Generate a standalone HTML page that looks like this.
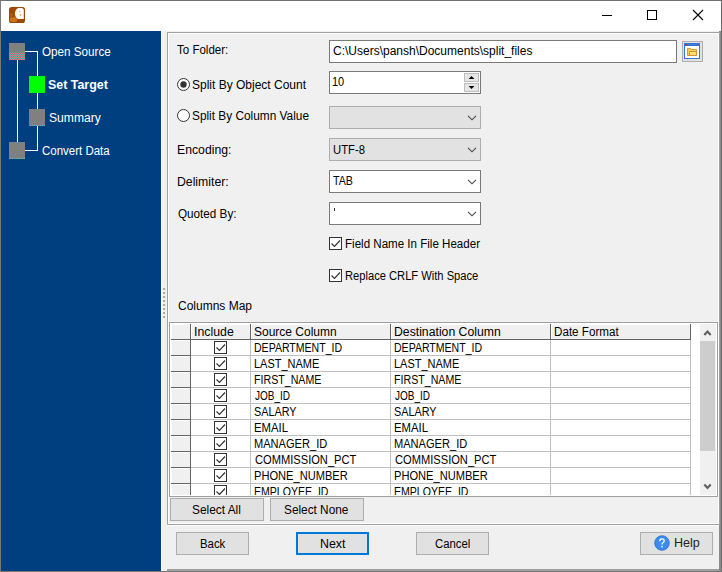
<!DOCTYPE html><html><head><meta charset="utf-8"><style>
*{margin:0;padding:0;box-sizing:border-box}
html,body{width:722px;height:572px;overflow:hidden;background:#f0f0f0;font-family:'Liberation Sans', sans-serif}
.a{position:absolute}
.t{position:absolute;font-size:12px;line-height:14px;white-space:pre;transform-origin:0 0}
.btn{position:absolute;background:#e1e1e1;border:1px solid #adadad}
.edit{position:absolute;background:#fff;border:1px solid #7a7a7a}
.combo{position:absolute;background:#e2e2e2;border:1px solid #adadad}
.cb{position:absolute;width:13px;height:13px;border:1px solid #333;background:#fff}

</style></head><body>
<div class="a" style="left:0;top:0;width:722px;height:31px;background:#fff"></div>
<div class="a" style="left:0;top:0;width:722px;height:1px;background:#6f6f6f"></div>
<div class="a" style="left:0;top:0;width:1px;height:572px;background:#7a7a7a"></div>
<div class="a" style="left:721px;top:0;width:1px;height:572px;background:#6a6a6a"></div>
<div class="a" style="left:719px;top:31px;width:2px;height:541px;background:#8c8c8c"></div>
<div class="a" style="left:0;top:571px;width:722px;height:1px;background:#777"></div>
<svg class="a" style="left:9px;top:7px" width="16" height="16" viewBox="0 0 16 16">
<rect x="0" y="0" width="16" height="16" rx="2.6" fill="#9c4a04"/>
<ellipse cx="4.5" cy="12.5" rx="3.8" ry="2.6" fill="#d27a1c" opacity="0.85"/>
<ellipse cx="2.5" cy="8" rx="1.5" ry="2" fill="#b8621a" opacity="0.7"/>
<path d="M9.3 1 L13.2 1 L14.8 2.6 L14.8 12 L9.3 12 Q6.2 10.8 5.8 6.8 Q6.2 2.2 9.3 1 Z" fill="#fdfbf7"/>
<circle cx="11.5" cy="8" r="0.9" fill="#f7b256"/>
<circle cx="10.5" cy="4.5" r="0.7" fill="#f4b0a0"/>
<circle cx="8.2" cy="5.5" r="0.6" fill="#e8e0a0"/>
</svg>
<div class="a" style="left:602px;top:15px;width:10px;height:1px;background:#000"></div>
<div class="a" style="left:647px;top:10px;width:10px;height:10px;border:1px solid #000"></div>
<svg class="a" style="left:692px;top:9px" width="12" height="12" viewBox="0 0 12 12"><path d="M1 1 L11 11 M11 1 L1 11" stroke="#000" stroke-width="1.1"/></svg>
<div class="a" style="left:1px;top:31px;width:160px;height:540px;background:#003f7f"></div>
<div class="a" style="left:17px;top:60px;width:1px;height:82px;background:#fff"></div>
<div class="a" style="left:25px;top:51px;width:13px;height:1px;background:#fff"></div>
<div class="a" style="left:37px;top:51px;width:1px;height:25px;background:#fff"></div>
<div class="a" style="left:37px;top:93px;width:1px;height:16px;background:#fff"></div>
<div class="a" style="left:37px;top:126px;width:1px;height:25px;background:#fff"></div>
<div class="a" style="left:25px;top:150px;width:13px;height:1px;background:#fff"></div>
<div class="a" style="left:9px;top:43px;width:16px;height:17px;background:#808080"></div>
<svg class="a" style="left:9px;top:52px" width="16" height="8"><defs><pattern id="dith" width="2" height="2" patternUnits="userSpaceOnUse"><rect width="2" height="2" fill="#5fb0b0"/><rect width="1" height="1" fill="#c86a6a"/><rect x="1" y="1" width="1" height="1" fill="#c86a6a"/></pattern></defs><rect width="16" height="8" fill="url(#dith)"/></svg>
<div class="a" style="left:9px;top:52px;width:16px;height:1px;background:#808080;opacity:.5"></div>
<div class="a" style="left:29px;top:76px;width:16px;height:17px;background:#00ff00"></div>
<div class="a" style="left:29px;top:109px;width:16px;height:17px;background:#808080"></div>
<div class="a" style="left:9px;top:142px;width:16px;height:17px;background:#808080"></div>
<svg class="a" style="left:29px;top:125px" width="16" height="1"><rect width="16" height="1" fill="url(#dith)"/></svg>
<svg class="a" style="left:9px;top:158px" width="16" height="1"><rect width="16" height="1" fill="url(#dith)"/></svg>
<div class="a" style="left:161px;top:31px;width:1px;height:540px;background:#fff"></div>
<div class="a" style="left:162px;top:287px;width:1px;height:1px;background:#fff"></div>
<div class="a" style="left:163px;top:288px;width:2px;height:2px;background:#a8a8a8"></div>
<div class="a" style="left:162px;top:291px;width:1px;height:1px;background:#fff"></div>
<div class="a" style="left:163px;top:292px;width:2px;height:2px;background:#a8a8a8"></div>
<div class="a" style="left:162px;top:295px;width:1px;height:1px;background:#fff"></div>
<div class="a" style="left:163px;top:296px;width:2px;height:2px;background:#a8a8a8"></div>
<div class="a" style="left:162px;top:299px;width:1px;height:1px;background:#fff"></div>
<div class="a" style="left:163px;top:300px;width:2px;height:2px;background:#a8a8a8"></div>
<div class="a" style="left:162px;top:303px;width:1px;height:1px;background:#fff"></div>
<div class="a" style="left:163px;top:304px;width:2px;height:2px;background:#a8a8a8"></div>
<div class="a" style="left:162px;top:307px;width:1px;height:1px;background:#fff"></div>
<div class="a" style="left:163px;top:308px;width:2px;height:2px;background:#a8a8a8"></div>
<div class="a" style="left:162px;top:311px;width:1px;height:1px;background:#fff"></div>
<div class="a" style="left:163px;top:312px;width:2px;height:2px;background:#a8a8a8"></div>
<div class="a" style="left:162px;top:315px;width:1px;height:1px;background:#fff"></div>
<div class="a" style="left:163px;top:316px;width:2px;height:2px;background:#a8a8a8"></div>
<div class="a" style="left:167px;top:32px;width:552px;height:1px;background:#a0a0a0"></div>
<div class="a" style="left:167px;top:32px;width:1px;height:492px;background:#a0a0a0"></div>
<div class="a" style="left:168px;top:33px;width:550px;height:1px;background:#fff"></div>
<div class="a" style="left:168px;top:33px;width:1px;height:490px;background:#fff"></div>
<div class="a" style="left:718px;top:33px;width:1px;height:491px;background:#fff"></div>
<div class="a" style="left:168px;top:523px;width:551px;height:1px;background:#fff"></div>
<div class="a" style="left:719px;top:32px;width:1px;height:493px;background:#a0a0a0"></div>
<div class="a" style="left:167px;top:524px;width:553px;height:1px;background:#a0a0a0"></div>
<div class="a" style="left:167px;top:525px;width:552px;height:1px;background:#fff"></div>
<div class="a" style="left:167px;top:569px;width:552px;height:2px;background:#a0a0a0"></div>
<div class="edit" style="left:329px;top:40px;width:348px;height:23px"></div>
<div class="btn" style="left:682px;top:41px;width:21px;height:21px"></div>
<svg class="a" style="left:684px;top:43px" width="16" height="16" viewBox="0 0 16 16">
<rect x="0" y="0" width="16" height="16" fill="#3a75d6"/>
<rect x="1" y="3" width="14" height="12" fill="#fff"/>
<rect x="1" y="1" width="1.5" height="1.5" fill="#e11"/>
<path d="M3.5 5.5 L6.5 5.5 L7.5 6.5 L12.5 6.5 L12.5 12.5 L3.5 12.5 Z" fill="#fbd35a" stroke="#e0902a" stroke-width="1"/>
<path d="M5.5 8.5 L12.5 8.5 L12.5 12.5 L5.5 12.5Z" fill="#fde27a" stroke="#e0902a" stroke-width="1"/>
</svg>
<div class="edit" style="left:329px;top:71px;width:152px;height:23px"></div>
<div class="a" style="left:464px;top:73px;width:15px;height:9px;background:#e6e6e6;border:1px solid #bdbdbd"></div>
<div class="a" style="left:464px;top:83px;width:15px;height:9px;background:#e6e6e6;border:1px solid #bdbdbd"></div>
<svg class="a" style="left:468px;top:75px" width="8" height="5"><path d="M0.6 3.9 L3.5 0.9 L6.4 3.9Z" fill="#000"/></svg>
<svg class="a" style="left:468px;top:85px" width="8" height="5"><path d="M0.6 1 L6.4 1 L3.5 4Z" fill="#000"/></svg>
<svg class="a" style="left:176px;top:77px" width="15" height="15" viewBox="0 0 15 15"><circle cx="7.5" cy="7.5" r="6" fill="#fff" stroke="#333" stroke-width="1"/><circle cx="7.5" cy="7.5" r="3.2" fill="#333"/></svg>
<svg class="a" style="left:176px;top:108px" width="15" height="15" viewBox="0 0 15 15"><circle cx="7.5" cy="7.5" r="6" fill="#fff" stroke="#333" stroke-width="1"/></svg>
<div class="combo" style="left:329px;top:106px;width:152px;height:23px"></div>
<svg class="a" style="left:467px;top:115px" width="10" height="6"><path d="M1 0.8 L5 4.8 L9 0.8" fill="none" stroke="#444" stroke-width="1.1"/></svg>
<div class="combo" style="left:329px;top:138px;width:152px;height:23px"></div>
<svg class="a" style="left:467px;top:147px" width="10" height="6"><path d="M1 0.8 L5 4.8 L9 0.8" fill="none" stroke="#444" stroke-width="1.1"/></svg>
<div class="edit" style="left:329px;top:170px;width:152px;height:23px"></div>
<svg class="a" style="left:467px;top:179px" width="10" height="6"><path d="M1 0.8 L5 4.8 L9 0.8" fill="none" stroke="#444" stroke-width="1.1"/></svg>
<div class="edit" style="left:329px;top:202px;width:152px;height:23px"></div>
<svg class="a" style="left:467px;top:211px" width="10" height="6"><path d="M1 0.8 L5 4.8 L9 0.8" fill="none" stroke="#444" stroke-width="1.1"/></svg>
<div class="a" style="left:334px;top:208px;width:1px;height:3px;background:#333"></div>
<div class="cb" style="left:329px;top:237px"></div>
<svg class="a" style="left:329px;top:237px" width="13" height="13"><path d="M2.5 6.5 L5.5 9.5 L11 3.5" fill="none" stroke="#333" stroke-width="1.2"/></svg>
<div class="cb" style="left:329px;top:269px"></div>
<svg class="a" style="left:329px;top:269px" width="13" height="13"><path d="M2.5 6.5 L5.5 9.5 L11 3.5" fill="none" stroke="#333" stroke-width="1.2"/></svg>
<div class="a" style="left:169px;top:322px;width:549px;height:175px;border:1px solid #a0a0a0;background:#fff"></div>
<div class="a" style="left:172px;top:325px;width:18px;height:14px;background:#f0f0f0"></div>
<div class="a" style="left:192px;top:325px;width:58px;height:14px;background:#f0f0f0"></div>
<div class="a" style="left:252px;top:325px;width:138px;height:14px;background:#f0f0f0"></div>
<div class="a" style="left:392px;top:325px;width:158px;height:14px;background:#f0f0f0"></div>
<div class="a" style="left:552px;top:325px;width:138px;height:14px;background:#f0f0f0"></div>
<div class="a" style="left:171px;top:339px;width:520px;height:1px;background:#646464"></div>
<div class="a" style="left:190px;top:324px;width:1px;height:15px;background:#646464"></div>
<div class="a" style="left:250px;top:324px;width:1px;height:15px;background:#646464"></div>
<div class="a" style="left:390px;top:324px;width:1px;height:15px;background:#646464"></div>
<div class="a" style="left:550px;top:324px;width:1px;height:15px;background:#646464"></div>
<div class="a" style="left:690px;top:324px;width:1px;height:15px;background:#646464"></div>
<div class="a" style="left:172px;top:341px;width:18px;height:14px;background:#f0f0f0"></div>
<div class="a" style="left:171px;top:355px;width:20px;height:1px;background:#646464"></div>
<div class="a" style="left:191px;top:355px;width:500px;height:1px;background:#c0c0c0"></div>
<div class="a" style="left:172px;top:357px;width:18px;height:14px;background:#f0f0f0"></div>
<div class="a" style="left:171px;top:371px;width:20px;height:1px;background:#646464"></div>
<div class="a" style="left:191px;top:371px;width:500px;height:1px;background:#c0c0c0"></div>
<div class="a" style="left:172px;top:373px;width:18px;height:14px;background:#f0f0f0"></div>
<div class="a" style="left:171px;top:387px;width:20px;height:1px;background:#646464"></div>
<div class="a" style="left:191px;top:387px;width:500px;height:1px;background:#c0c0c0"></div>
<div class="a" style="left:172px;top:389px;width:18px;height:14px;background:#f0f0f0"></div>
<div class="a" style="left:171px;top:403px;width:20px;height:1px;background:#646464"></div>
<div class="a" style="left:191px;top:403px;width:500px;height:1px;background:#c0c0c0"></div>
<div class="a" style="left:172px;top:405px;width:18px;height:14px;background:#f0f0f0"></div>
<div class="a" style="left:171px;top:419px;width:20px;height:1px;background:#646464"></div>
<div class="a" style="left:191px;top:419px;width:500px;height:1px;background:#c0c0c0"></div>
<div class="a" style="left:172px;top:421px;width:18px;height:14px;background:#f0f0f0"></div>
<div class="a" style="left:171px;top:435px;width:20px;height:1px;background:#646464"></div>
<div class="a" style="left:191px;top:435px;width:500px;height:1px;background:#c0c0c0"></div>
<div class="a" style="left:172px;top:437px;width:18px;height:14px;background:#f0f0f0"></div>
<div class="a" style="left:171px;top:451px;width:20px;height:1px;background:#646464"></div>
<div class="a" style="left:191px;top:451px;width:500px;height:1px;background:#c0c0c0"></div>
<div class="a" style="left:172px;top:453px;width:18px;height:14px;background:#f0f0f0"></div>
<div class="a" style="left:171px;top:467px;width:20px;height:1px;background:#646464"></div>
<div class="a" style="left:191px;top:467px;width:500px;height:1px;background:#c0c0c0"></div>
<div class="a" style="left:172px;top:469px;width:18px;height:14px;background:#f0f0f0"></div>
<div class="a" style="left:171px;top:483px;width:20px;height:1px;background:#646464"></div>
<div class="a" style="left:191px;top:483px;width:500px;height:1px;background:#c0c0c0"></div>
<div class="a" style="left:172px;top:485px;width:18px;height:10px;background:#f0f0f0"></div>
<div class="a" style="left:190px;top:340px;width:1px;height:155px;background:#646464"></div>
<div class="a" style="left:250px;top:340px;width:1px;height:155px;background:#c0c0c0"></div>
<div class="a" style="left:390px;top:340px;width:1px;height:155px;background:#c0c0c0"></div>
<div class="a" style="left:550px;top:340px;width:1px;height:155px;background:#c0c0c0"></div>
<div class="a" style="left:690px;top:340px;width:1px;height:155px;background:#c0c0c0"></div>
<div class="cb" style="left:214px;top:341px"></div>
<svg class="a" style="left:214px;top:341px" width="13" height="13"><path d="M2.5 6.5 L5.5 9.5 L11 3.5" fill="none" stroke="#333" stroke-width="1.2"/></svg>
<div class="cb" style="left:214px;top:357px"></div>
<svg class="a" style="left:214px;top:357px" width="13" height="13"><path d="M2.5 6.5 L5.5 9.5 L11 3.5" fill="none" stroke="#333" stroke-width="1.2"/></svg>
<div class="cb" style="left:214px;top:373px"></div>
<svg class="a" style="left:214px;top:373px" width="13" height="13"><path d="M2.5 6.5 L5.5 9.5 L11 3.5" fill="none" stroke="#333" stroke-width="1.2"/></svg>
<div class="cb" style="left:214px;top:389px"></div>
<svg class="a" style="left:214px;top:389px" width="13" height="13"><path d="M2.5 6.5 L5.5 9.5 L11 3.5" fill="none" stroke="#333" stroke-width="1.2"/></svg>
<div class="cb" style="left:214px;top:405px"></div>
<svg class="a" style="left:214px;top:405px" width="13" height="13"><path d="M2.5 6.5 L5.5 9.5 L11 3.5" fill="none" stroke="#333" stroke-width="1.2"/></svg>
<div class="cb" style="left:214px;top:421px"></div>
<svg class="a" style="left:214px;top:421px" width="13" height="13"><path d="M2.5 6.5 L5.5 9.5 L11 3.5" fill="none" stroke="#333" stroke-width="1.2"/></svg>
<div class="cb" style="left:214px;top:437px"></div>
<svg class="a" style="left:214px;top:437px" width="13" height="13"><path d="M2.5 6.5 L5.5 9.5 L11 3.5" fill="none" stroke="#333" stroke-width="1.2"/></svg>
<div class="cb" style="left:214px;top:453px"></div>
<svg class="a" style="left:214px;top:453px" width="13" height="13"><path d="M2.5 6.5 L5.5 9.5 L11 3.5" fill="none" stroke="#333" stroke-width="1.2"/></svg>
<div class="cb" style="left:214px;top:469px"></div>
<svg class="a" style="left:214px;top:469px" width="13" height="13"><path d="M2.5 6.5 L5.5 9.5 L11 3.5" fill="none" stroke="#333" stroke-width="1.2"/></svg>
<div class="a" style="left:214px;top:485px;width:13px;height:10px;overflow:hidden"><div class="cb" style="left:0;top:0"></div><svg class="a" style="left:0;top:0" width="13" height="13"><path d="M2.5 6.5 L5.5 9.5 L11 3.5" fill="none" stroke="#333" stroke-width="1.2"/></svg></div>
<div class="a" style="left:700px;top:324px;width:16px;height:171px;background:#f0f0f0"></div>
<div class="a" style="left:700px;top:341px;width:15px;height:110px;background:#cdcdcd"></div>
<svg class="a" style="left:703px;top:329px" width="10" height="8"><polyline points="1.3,6 4.5,2.6 7.7,6" fill="none" stroke="#606060" stroke-width="2.2"/></svg>
<svg class="a" style="left:703px;top:483px" width="10" height="8"><polyline points="1.3,1.6 4.5,5 7.7,1.6" fill="none" stroke="#606060" stroke-width="2.2"/></svg>
<div class="btn" style="left:170px;top:498px;width:94px;height:23px"></div>
<div class="btn" style="left:270px;top:498px;width:94px;height:23px"></div>
<div class="btn" style="left:176px;top:532px;width:73px;height:23px"></div>
<div class="btn" style="left:296px;top:532px;width:73px;height:23px;border:2px solid #0078d7"></div>
<div class="btn" style="left:416px;top:532px;width:73px;height:23px"></div>
<div class="btn" style="left:640px;top:532px;width:73px;height:23px"></div>
<svg class="a" style="left:654px;top:535px" width="16" height="16" viewBox="0 0 16 16"><circle cx="8" cy="8" r="7.3" fill="#3d8af0" stroke="#2a6cc8" stroke-width="0.8"/><path d="M5.8 6.2 Q5.8 3.8 8 3.8 Q10.2 3.8 10.2 5.8 Q10.2 7 8.8 7.8 Q8 8.3 8 9.6" fill="none" stroke="#fff" stroke-width="1.3"/><rect x="7.3" y="10.8" width="1.4" height="1.5" fill="#fff"/></svg>
<div class="a tw" style="left:0;top:0;width:722px;height:572px">
<div class="t" style="left:42.00px;top:45.00px;color:#fff;transform:scaleX(0.9714);">Open Source</div>
<div class="t" style="left:47.96px;top:78.00px;color:#fff;font-weight:bold;transform:scaleX(1.0351);">Set Target</div>
<div class="t" style="left:48.99px;top:111.00px;color:#fff;transform:scaleX(1.0100);">Summary</div>
<div class="t" style="left:42.00px;top:144.00px;color:#fff;transform:scaleX(0.9577);">Convert Data</div>
<div class="t" style="left:177.00px;top:43.00px;color:#000;transform:scaleX(0.9615);">To Folder:</div>
<div class="t" style="left:333.00px;top:44.00px;color:#000;">C:\Users\pansh\Documents\split_files</div>
<div class="t" style="left:192.00px;top:78.00px;color:#000;">Split By Object Count</div>
<div class="t" style="left:332.08px;top:75.00px;color:#000;transform:scaleX(0.9167);">10</div>
<div class="t" style="left:192.01px;top:109.00px;color:#000;transform:scaleX(0.9872);">Split By Column Value</div>
<div class="t" style="left:176.98px;top:143.00px;color:#000;transform:scaleX(1.0196);">Encoding:</div>
<div class="t" style="left:333.06px;top:143.00px;color:#000;transform:scaleX(0.9394);">UTF-8</div>
<div class="t" style="left:176.98px;top:175.00px;color:#000;transform:scaleX(1.0204);">Delimiter:</div>
<div class="t" style="left:333.00px;top:174.00px;color:#000;transform:scaleX(0.8864);">TAB</div>
<div class="t" style="left:178.00px;top:207.00px;color:#000;transform:scaleX(0.9746);">Quoted By:</div>
<div class="t" style="left:345.04px;top:237.00px;color:#000;transform:scaleX(0.9640);">Field Name In File Header</div>
<div class="t" style="left:345.07px;top:269.00px;color:#000;transform:scaleX(0.9296);">Replace CRLF With Space</div>
<div class="t" style="left:178.00px;top:299.00px;color:#000;">Columns Map</div>
<div class="t" style="left:193.97px;top:325.00px;color:#000;transform:scaleX(1.0270);">Include</div>
<div class="t" style="left:254.00px;top:325.00px;color:#000;">Source Column</div>
<div class="t" style="left:393.98px;top:325.00px;color:#000;transform:scaleX(1.0194);">Destination Column</div>
<div class="t" style="left:554.03px;top:325.00px;color:#000;transform:scaleX(0.9697);">Date Format</div>
<div class="t" style="left:192.01px;top:503.00px;color:#000;transform:scaleX(0.9896);">Select All</div>
<div class="t" style="left:284.02px;top:503.00px;color:#000;transform:scaleX(0.9844);">Select None</div>
<div class="t" style="left:200.05px;top:537.00px;color:#000;transform:scaleX(0.9462);">Back</div>
<div class="t" style="left:319.97px;top:537.00px;color:#000;transform:scaleX(1.0292);">Next</div>
<div class="t" style="left:435.00px;top:537.00px;color:#000;transform:scaleX(0.9459);">Cancel</div>
<div class="t" style="left:673.96px;top:536.00px;color:#222;transform:scaleX(1.0435);">Help</div>
<div class="a" style="left:0;top:340px;width:722px;height:155px;overflow:hidden"><div class="a" style="left:0;top:-340px;width:722px;height:572px">
<div class="t" style="left:254.12px;top:341.00px;color:#000;transform:scaleX(0.8788);">DEPARTMENT_ID</div>
<div class="t" style="left:394.12px;top:341.00px;color:#000;transform:scaleX(0.8788);">DEPARTMENT_ID</div>
<div class="t" style="left:254.09px;top:357.00px;color:#000;transform:scaleX(0.9143);">LAST_NAME</div>
<div class="t" style="left:394.09px;top:357.00px;color:#000;transform:scaleX(0.9143);">LAST_NAME</div>
<div class="t" style="left:254.11px;top:373.00px;color:#000;transform:scaleX(0.8867);">FIRST_NAME</div>
<div class="t" style="left:394.11px;top:373.00px;color:#000;transform:scaleX(0.8867);">FIRST_NAME</div>
<div class="t" style="left:255.00px;top:389.00px;color:#000;transform:scaleX(0.8333);">JOB_ID</div>
<div class="t" style="left:395.00px;top:389.00px;color:#000;transform:scaleX(0.8333);">JOB_ID</div>
<div class="t" style="left:254.10px;top:405.00px;color:#000;transform:scaleX(0.9022);">SALARY</div>
<div class="t" style="left:394.10px;top:405.00px;color:#000;transform:scaleX(0.9022);">SALARY</div>
<div class="t" style="left:254.06px;top:421.00px;color:#000;transform:scaleX(0.9429);">EMAIL</div>
<div class="t" style="left:394.06px;top:421.00px;color:#000;transform:scaleX(0.9429);">EMAIL</div>
<div class="t" style="left:254.08px;top:437.00px;color:#000;transform:scaleX(0.9231);">MANAGER_ID</div>
<div class="t" style="left:394.08px;top:437.00px;color:#000;transform:scaleX(0.9231);">MANAGER_ID</div>
<div class="t" style="left:255.00px;top:453.00px;color:#000;transform:scaleX(0.9266);">COMMISSION_PCT</div>
<div class="t" style="left:395.00px;top:453.00px;color:#000;transform:scaleX(0.9266);">COMMISSION_PCT</div>
<div class="t" style="left:254.07px;top:469.00px;color:#000;transform:scaleX(0.9250);">PHONE_NUMBER</div>
<div class="t" style="left:394.07px;top:469.00px;color:#000;transform:scaleX(0.9250);">PHONE_NUMBER</div>
<div class="t" style="left:254.12px;top:485.00px;color:#000;transform:scaleX(0.8795);">EMPLOYEE_ID</div>
<div class="t" style="left:394.12px;top:485.00px;color:#000;transform:scaleX(0.8795);">EMPLOYEE_ID</div>
</div></div>
</div>
</body></html>
